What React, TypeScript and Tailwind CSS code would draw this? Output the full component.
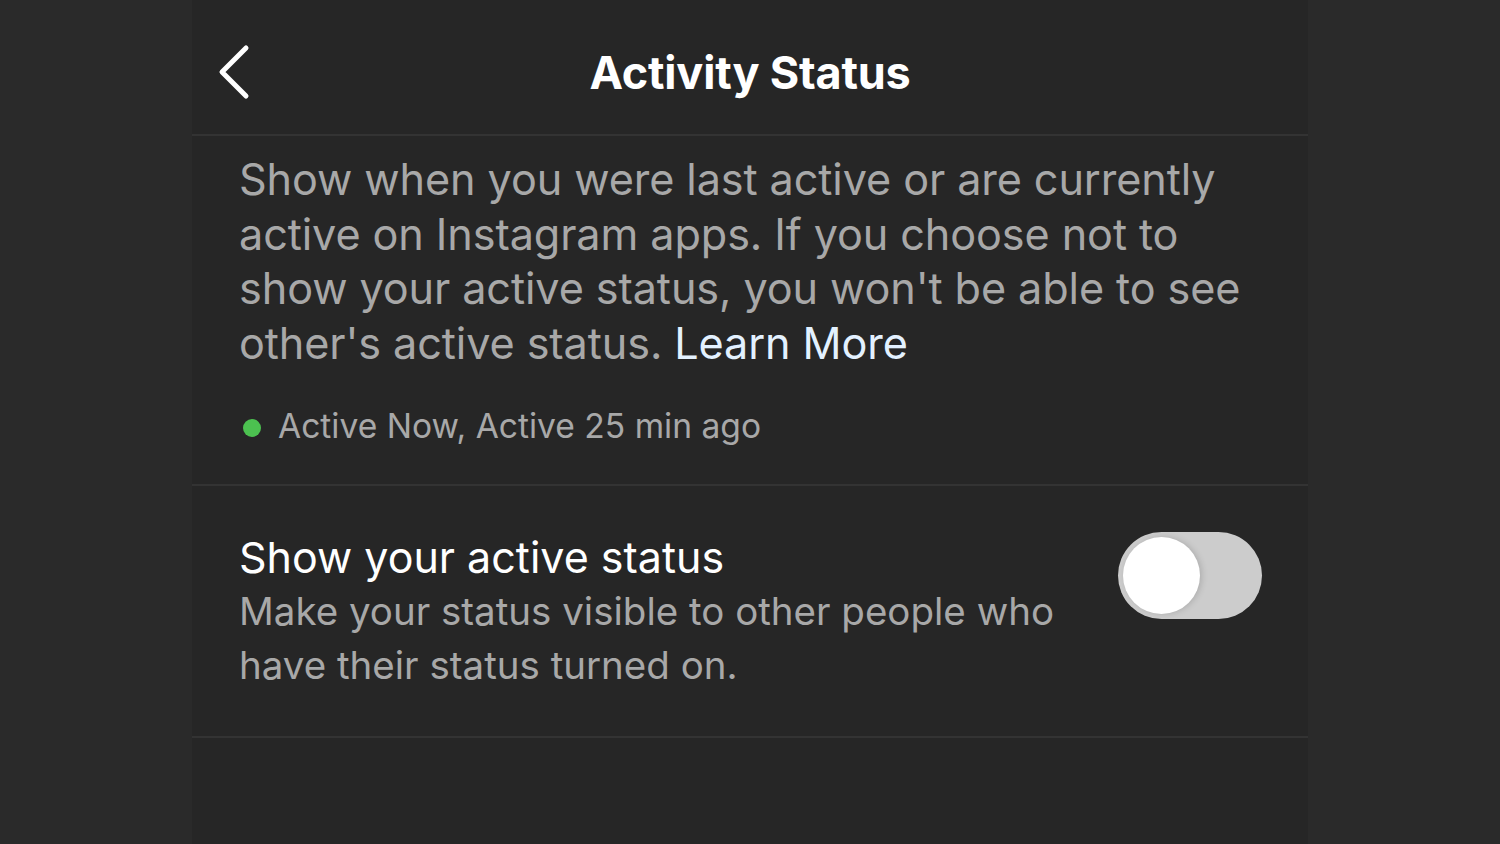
import { useState } from 'react';

const font = { fontFamily: 'Inter, "Noto Sans", sans-serif' };

function BackChevron() {
  return (
    <svg width="36" height="56" viewBox="0 0 36 56" fill="none">
      <path d="M30 4 L6 28 L30 52" stroke="#ffffff" strokeWidth="5" strokeLinecap="round" strokeLinejoin="round" />
    </svg>
  );
}

function Toggle({ on, onChange }: { on: boolean; onChange: (v: boolean) => void }) {
  return (
    <button
      onClick={() => onChange(!on)}
      className={`relative w-[144px] h-[87px] rounded-full shrink-0 transition-colors ${on ? 'bg-[#0095f6]' : 'bg-[#cccccc]'}`}
    >
      <span
        className={`absolute top-[5px] w-[77px] h-[77px] rounded-full bg-white shadow-[2px_0_6px_rgba(0,0,0,0.15)] transition-all ${on ? 'left-[62px]' : 'left-[5px]'}`}
      />
    </button>
  );
}

export default function App() {
  const [showStatus, setShowStatus] = useState(false);

  return (
    <div className="min-h-screen bg-[#2a2a2a] flex justify-center" style={font}>
      <div className="w-[1116px] min-h-[844px] bg-[#262626]">
        {/* Header */}
        <div className="relative h-[136px] flex items-center justify-center border-b-2 border-[#333333]">
          <button className="absolute left-[24px] top-[44px]">
            <BackChevron />
          </button>
          <h1 className="text-[45px] font-bold text-white tracking-[-0.2px] mt-[12px]">Activity Status</h1>
        </div>

        {/* Description */}
        <div className="pl-[47px] pr-[50px] pt-[16px] pb-[38px] border-b-2 border-[#333333]">
          <p className="text-[43.2px] leading-[54.5px] text-[#a8a8a8] tracking-[-0.1px]">
            Show when you were last active or are currently active on Instagram apps. If you choose not to show your
            active status, you won't be able to see other's active status.{' '}
            <span className="text-[#e3f1ff]">Learn More</span>
          </p>
          <div className="mt-[36px] flex items-center gap-[17px] pl-[4px]">
            <span className="w-[18px] h-[18px] rounded-full bg-[#4cc150] mt-[4px]" />
            <span className="text-[33.6px] leading-[40px] text-[#a8a8a8]">Active Now, Active 25 min ago</span>
          </div>
        </div>

        {/* Toggle row */}
        <div className="pl-[47px] pr-[46px] pt-[44px] pb-[44px] flex items-center justify-between border-b-2 border-[#333333]">
          <div className="w-[840px]">
            <div className="text-[43px] leading-[54px] text-white">Show your active status</div>
            <div className="text-[38.5px] leading-[54px] text-[#a8a8a8]">
              Make your status visible to other people who have their status turned on.
            </div>
          </div>
          <div className="-mt-[66px]">
            <Toggle on={showStatus} onChange={setShowStatus} />
          </div>
        </div>
      </div>
    </div>
  );
}
